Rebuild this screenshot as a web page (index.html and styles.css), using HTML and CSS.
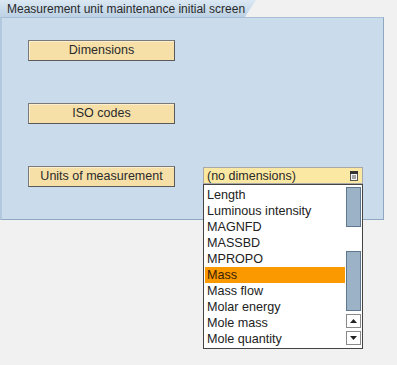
FILE: index.html
```html
<!DOCTYPE html>
<html>
<head>
<meta charset="utf-8">
<link rel="stylesheet" href="styles.css">
</head>
<body>
<div class="screen">
  <div class="tab"><span class="tab-label">Measurement unit maintenance initial screen</span></div>
  <div class="panel">
    <button class="btn">Dimensions</button>
    <button class="btn">ISO codes</button>
    <div class="row">
      <button class="btn">Units of measurement</button>
    </div>
  </div>
  <div class="combo">
    <div class="combo-field">
      <span>(no dimensions)</span>
      <svg class="combo-icon" width="8" height="10" viewBox="0 0 8 10">
        <rect x="0.5" y="0.5" width="7" height="9" fill="#f4f4f4" stroke="#555"/>
        <rect x="0" y="0" width="8" height="3" fill="#333"/>
        <line x1="2" y1="5" x2="6" y2="5" stroke="#555"/>
        <line x1="2" y1="7" x2="6" y2="7" stroke="#555"/>
      </svg>
    </div>
    <div class="listbox">
      <ul class="items">
        <li>Length</li>
        <li>Luminous intensity</li>
        <li>MAGNFD</li>
        <li>MASSBD</li>
        <li>MPROPO</li>
        <li class="sel">Mass</li>
        <li>Mass flow</li>
        <li>Molar energy</li>
        <li>Mole mass</li>
        <li>Mole quantity</li>
      </ul>
      <div class="scroll">
        <div class="track">
          <div class="seg seg-a"></div>
          <div class="thumb"></div>
          <div class="seg seg-b"></div>
        </div>
        <div class="arrow"><svg width="7" height="4" viewBox="0 0 7 4"><path d="M0 4 L3.5 0 L7 4 Z" fill="#222"/></svg></div>
        <div class="arrow"><svg width="7" height="4" viewBox="0 0 7 4"><path d="M0 0 L3.5 4 L7 0 Z" fill="#222"/></svg></div>
      </div>
    </div>
  </div>
</div>
</body>
</html>
```
FILE: styles.css
```css
html, body {
  margin: 0;
  padding: 0;
  background: #f1f1f1;
  font-family: "Liberation Sans", Arial, sans-serif;
  color: #222;
}
.screen {
  position: relative;
  width: 397px;
  height: 365px;
  overflow: hidden;
}
.tab {
  height: 17px;
  width: 256px;
  background: linear-gradient(#dbe8f3, #bcd1e4);
  clip-path: polygon(0 0, 256px 0, 245px 17px, 0 17px);
  display: flex;
  align-items: center;
}
.tab-label {
  font-size: 12px;
  color: #2a2a2a;
  padding-left: 7px;
  white-space: nowrap;
}
.panel {
  width: 381px;
  height: 200px;
  background: #cadbeb;
  border-top: 1px solid #a7bfd6;
  border-left: 2px solid #b2c8dc;
  border-right: 1px solid #8ea8c2;
  border-bottom: 1px solid #8ea8c2;
  box-sizing: content-box;
  padding: 22px 0 0 26px;
  box-sizing: border-box;
  width: 384px;
  height: 203px;
  display: flex;
  flex-direction: column;
  align-items: flex-start;
  gap: 42px;
}
.btn {
  width: 147px;
  height: 21px;
  margin: 0;
  padding: 0;
  background: #f6e0a8;
  border: 1px solid #5a5a5a;
  border-top-color: #7a7a7a;
  border-left-color: #7a7a7a;
  box-shadow: inset 1px 1px 0 #fbefcf;
  font-family: "Liberation Sans", Arial, sans-serif;
  font-size: 12.5px;
  color: #2a2a2a;
  text-align: center;
  line-height: 19px;
}
.combo {
  position: absolute;
  left: 203px;
  top: 167px;
  width: 160px;
}
.combo-field {
  height: 17px;
  box-sizing: border-box;
  background: #fbe9a3;
  border: 1px solid #a8a8a8;
  display: flex;
  align-items: center;
  justify-content: space-between;
  padding: 0 4px 0 3px;
  font-size: 12.5px;
  color: #2a2a2a;
}
.combo-icon {
  display: block;
}
.listbox {
  height: 165px;
  box-sizing: border-box;
  background: #fff;
  border: 1px solid #444;
  display: flex;
  padding: 2px 1px 1px 1px;
}
.items {
  list-style: none;
  margin: 0;
  padding: 0;
  flex: 1;
}
.items li {
  height: 16px;
  line-height: 16px;
  font-size: 12.6px;
  color: #222;
  padding-left: 2px;
  margin-right: 1px;
  white-space: nowrap;
}
.items li.sel {
  background: #fb9a00;
  color: #3a2000;
}
.scroll {
  width: 15px;
  display: flex;
  flex-direction: column;
  gap: 3px;
}
.track {
  display: flex;
  flex-direction: column;
  height: 124px;
}
.seg {
  background: #9cb2c6;
  border: 1px solid #5f778e;
  box-sizing: border-box;
}
.seg-a { height: 40px; }
.thumb { height: 24px; background: #fff; }
.seg-b { height: 60px; }
.arrow {
  height: 14px;
  box-sizing: border-box;
  border: 1px solid #8a8a8a;
  background: #fff;
  display: flex;
  align-items: center;
  justify-content: center;
}
.arrow svg { display: block; }
```
